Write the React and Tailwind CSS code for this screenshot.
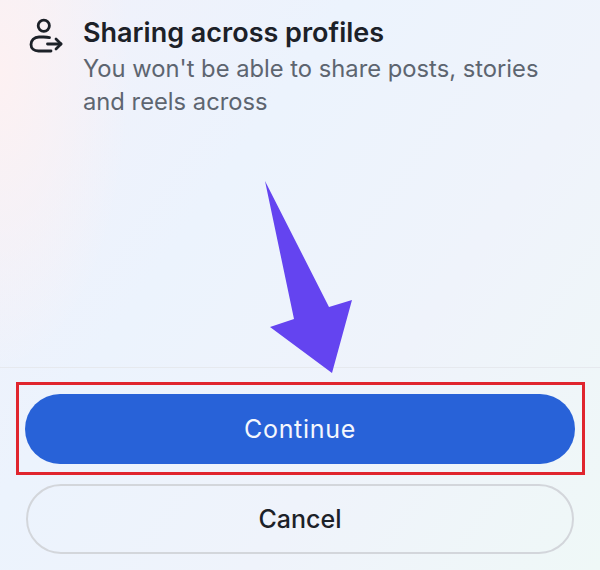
import React from 'react';

const App = () => {
  return (
    <div className="relative w-[600px] h-[570px] overflow-hidden flex flex-col font-['Inter',sans-serif] bg-[radial-gradient(ellipse_130px_300px_at_0px_70px,#fdf1f2_0%,rgba(253,241,242,0)_100%),linear-gradient(125deg,#f1f1fa_0%,#ecf3fd_35%,#eff3fb_65%,#eff8f7_100%)]">
      {/* Top row */}
      <div className="h-[368px] shrink-0 flex items-start pl-[28px] pt-[16px] gap-[19px] border-b border-[#e6e9ee]">
        <svg width="36" height="38" viewBox="0 0 36 38" fill="none" stroke="#1c2128" strokeWidth="2.8" strokeLinecap="round" strokeLinejoin="round" className="mt-[2px] shrink-0">
          <circle cx="15.8" cy="7.8" r="5.6" />
          <path d="M21.5 19.6C20 19.2 18 19 15.5 19H11C6 19 3 22.5 3 26.5C3 30.5 6 33 10.5 33H23" />
          <path d="M19.5 26H33" />
          <path d="M28 21L33 26L28 31" />
        </svg>
        <div>
          <h3 className="text-[27px] leading-[34px] font-semibold text-[#1c2128]">Sharing across profiles</h3>
          <p className="text-[23.75px] leading-[33px] mt-[2px] text-[#5d6570] w-[480px]">You won't be able to share posts, stories and reels across</p>
        </div>
      </div>

      {/* Red highlight around the primary button */}
      <div className="mt-[14px] ml-[16px] w-[569px] h-[93px] border-[3px] border-[#e0252e] pl-[6px] pr-[7px] pt-[9px]">
        <button className="w-full h-[70px] pt-[2px] rounded-full bg-[#2862d8] text-[#f4f7fd] text-[25px] font-normal tracking-[0.7px]">Continue</button>
      </div>

      <button className="mt-[9px] ml-[26px] w-[548px] h-[70px] pt-[2px] rounded-full border-2 border-[#d3d6db] text-[#1c2128] text-[25px] font-medium">Cancel</button>

      {/* Annotation arrow */}
      <svg className="absolute left-0 top-0 pointer-events-none" width="600" height="570" viewBox="0 0 600 570">
        <polygon points="265,181 329,307 352,300 332,373 270,327 294,319" fill="#6444f0" />
      </svg>
    </div>
  );
};

export default App;
